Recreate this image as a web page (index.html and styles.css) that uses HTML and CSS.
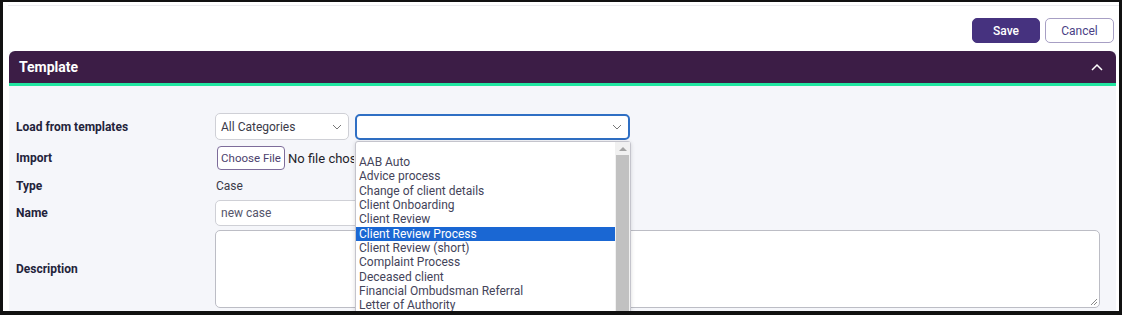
FILE: index.html
```html
<!DOCTYPE html>
<html lang="en">
<head>
    <meta charset="UTF-8">
    <meta name="viewport" content="width=device-width, initial-scale=1.0">
    <title>Template</title>
    <link rel="stylesheet" href="styles.css">
</head>
<body>
<div class="frame">
    <div class="toolbar">
        <button class="btn btn-save">Save</button>
        <button class="btn btn-cancel">Cancel</button>
    </div>

    <div class="panel">
        <div class="panel-head">
            <span>Template</span>
            <svg width="12" height="8" viewBox="0 0 12 8"><path d="M1 7 L6 2 L11 7" fill="none" stroke="#fff" stroke-width="1.5"/></svg>
        </div>

        <div class="panel-body">
            <div class="row row-load">
                <label>Load from templates</label>
                <div class="controls">
                    <div class="select sel-cat">All Categories
                        <svg width="10" height="6" viewBox="0 0 10 6"><path d="M1 1 L5 5 L9 1" fill="none" stroke="#777" stroke-width="1"/></svg>
                    </div>
                    <div class="select sel-tpl">
                        <svg width="10" height="6" viewBox="0 0 10 6"><path d="M1 1 L5 5 L9 1" fill="none" stroke="#777" stroke-width="1"/></svg>
                    </div>
                </div>
            </div>
            <div class="row row-import">
                <label>Import</label>
                <div class="controls">
                    <span class="file-btn">Choose File</span>
                    <span class="file-name">No file chosen</span>
                </div>
            </div>
            <div class="row row-type">
                <label>Type</label>
                <div class="controls"><span class="plain">Case</span></div>
            </div>
            <div class="row row-name">
                <label>Name</label>
                <div class="controls"><div class="input">new case</div></div>
            </div>
            <div class="row row-desc">
                <label>Description</label>
                <div class="controls">
                    <div class="textarea">
                        <svg class="grip" width="8" height="8" viewBox="0 0 8 8"><path d="M7 1 L1 7 M7 4 L4 7" stroke="#888" stroke-width="1"/></svg>
                    </div>
                </div>
            </div>

            <div class="dropdown">
                <ul>
                    <li>&nbsp;</li>
                    <li>AAB Auto</li>
                    <li>Advice process</li>
                    <li>Change of client details</li>
                    <li>Client Onboarding</li>
                    <li>Client Review</li>
                    <li class="active">Client Review Process</li>
                    <li>Client Review (short)</li>
                    <li>Complaint Process</li>
                    <li>Deceased client</li>
                    <li>Financial Ombudsman Referral</li>
                    <li>Letter of Authority</li>
                </ul>
                <div class="scroll">
                    <svg width="8" height="5" viewBox="0 0 8 5"><path d="M0 5 L4 1 L8 5 Z" fill="#a3a3a3"/></svg>
                    <div class="thumb"></div>
                </div>
            </div>
        </div>
    </div>
</div>
</body>
</html>
```

FILE: styles.css
```css
*{
    box-sizing: border-box;
}
body{
    margin: 0;
    font-family: Roboto, "Liberation Sans", sans-serif;
    font-size: 12px;
    color: #2b2b3a;
}
.frame{
    width: 1122px;
    height: 315px;
    border-style: solid;
    border-color: #111;
    border-width: 2px 3px 4px 3px;
    background: #fff;
    overflow: hidden;
}
.toolbar{
    height: 49px;
    display: flex;
    justify-content: flex-end;
    align-items: flex-start;
    gap: 5px;
    padding: 12px 5px 0 0;
    border-top: 1px solid #ececf0;
    margin: 3px 0 0 5px;
}
.btn{
    height: 25px;
    border-radius: 5px;
    font-family: Roboto, "Liberation Sans", sans-serif;
    font-size: 12px;
    padding: 0;
}
.btn-save{
    width: 68px;
    background: #46327f;
    color: #fff;
    border: 1px solid #46327f;
    font-weight: 500;
}
.btn-cancel{
    width: 69px;
    background: #fff;
    color: #4a3f86;
    border: 1px solid #a79fc4;
}
.panel{
    margin: -3px 3px 0 6px;
    background: #f5f6fa;
    height: 300px;
}
.panel-head{
    height: 35px;
    background: #3c1d46;
    border-radius: 6px 6px 0 0;
    border-bottom: 3px solid #20e6a0;
    color: #fff;
    font-weight: bold;
    font-size: 14px;
    display: flex;
    align-items: center;
    justify-content: space-between;
    padding: 0 13px 0 10px;
}
.panel-body{
    position: relative;
    padding: 27px 15px 0 7px;
}
.row{
    display: flex;
    align-items: center;
}
.row label{
    width: 199px;
    font-weight: bold;
    font-size: 12px;
    color: #23233a;
}
.controls{
    flex: 1;
    display: flex;
    align-items: center;
    gap: 6px;
}
.row-load{
    height: 27px;
}
.row-import{
    height: 24px;
    margin-top: 6px;
}
.row-type{
    height: 20px;
    margin-top: 6px;
}
.row-name{
    height: 26px;
    margin-top: 4px;
}
.row-desc{
    height: 78px;
    margin-top: 4px;
}
.select{
    height: 27px;
    background: #fff;
    border: 1px solid #cfd0d6;
    border-radius: 5px;
    display: flex;
    align-items: center;
    justify-content: space-between;
    padding: 0 6px 0 5px;
    color: #3a3a48;
}
.sel-cat{
    width: 134px;
}
.sel-tpl{
    width: 275px;
    height: 26px;
    justify-content: flex-end;
    border: 2px solid #2f6fc4;
}
.file-btn{
    margin-left: 2px;
    height: 24px;
    width: 68px;
    border: 1px solid #7d6c9a;
    border-radius: 4px;
    background: #fff;
    display: flex;
    align-items: center;
    justify-content: center;
    font-size: 11.5px;
    color: #4b3f6d;
}
.file-name{
    margin-left: -3px;
    width: 66px;
    overflow: hidden;
    white-space: nowrap;
    font-size: 13px;
    color: #1f1f2a;
}
.plain{
    margin-left: 1px;
    color: #3a3a48;
}
.input{
    width: 400px;
    height: 26px;
    background: #fff;
    border: 1px solid #cfd0d6;
    border-radius: 5px;
    display: flex;
    align-items: center;
    padding-left: 5px;
    color: #55556a;
}
.textarea{
    position: relative;
    width: 885px;
    height: 78px;
    background: #fff;
    border: 1px solid #bcbdc5;
    border-radius: 5px;
}
.grip{
    position: absolute;
    right: 1px;
    bottom: 1px;
}
.dropdown{
    position: absolute;
    left: 346px;
    top: 55px;
    width: 276px;
    height: 180px;
    background: #fff;
    border: 1px solid #c4c4cc;
    border-radius: 3px 3px 0 0;
    box-shadow: 0 1px 4px rgba(0,0,0,0.15);
    display: flex;
}
.dropdown ul{
    list-style: none;
    margin: 0;
    padding: 0;
    flex: 1;
}
.dropdown li{
    height: 14.35px;
    line-height: 14px;
    padding-left: 3px;
    font-size: 12px;
    color: #44445a;
    white-space: nowrap;
}
.dropdown li:first-child{
    height: 13px;
}
.dropdown li.active{
    background: #1a67d3;
    color: #fff;
}
.scroll{
    width: 15px;
    background: #f1f1f1;
    display: flex;
    flex-direction: column;
    align-items: center;
    padding-top: 4px;
}
.thumb{
    margin-top: 4px;
    width: 13px;
    flex: 1;
    background: #c1c1c1;
}
```
